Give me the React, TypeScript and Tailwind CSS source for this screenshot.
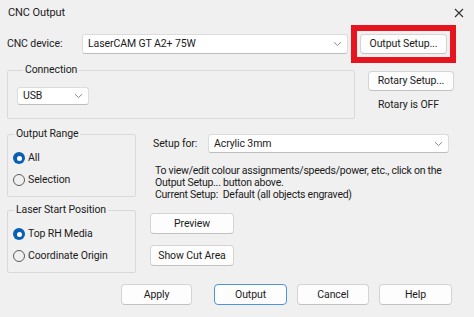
import React from 'react';

const Chevron = () => (
  <svg width="9" height="6" viewBox="0 0 9 6" className="shrink-0">
    <path d="M1 1.2 L4.5 4.6 L8 1.2" fill="none" stroke="#8a8a8a" strokeWidth="1" />
  </svg>
);

function Combo({ value, className }: { value: string; className: string }) {
  return (
    <div
      className={`flex items-center justify-between bg-white border border-[#dcdcdc] border-b-[#bdbdbd] rounded-[3px] pl-[5px] pr-[5px] ${className}`}
    >
      <span>{value}</span>
      <Chevron />
    </div>
  );
}

function Btn({ label, className, primary }: { label: string; className: string; primary?: boolean }) {
  return (
    <div
      className={`flex items-center justify-center bg-[#fdfdfd] rounded-[4px] border ${
        primary ? 'border-[#4f93d8]' : 'border-[#d4d4d4] border-b-[#c2c2c2]'
      } ${className}`}
    >
      {label}
    </div>
  );
}

function Radio({ label, checked }: { label: string; checked?: boolean }) {
  return (
    <div className="h-[22px] flex items-center pl-[5px]">
      {checked ? (
        <span className="w-[12px] h-[12px] rounded-full bg-[#0a5fb4] flex items-center justify-center">
          <span className="w-[5px] h-[5px] rounded-full bg-white" />
        </span>
      ) : (
        <span className="w-[12px] h-[12px] rounded-full border border-[#5c5c5c]" />
      )}
      <span className="ml-[3px]">{label}</span>
    </div>
  );
}

function Group({ title, className, children }: { title: string; className: string; children: React.ReactNode }) {
  return (
    <fieldset className={`border border-[#d9d9d9] rounded-[2px] ${className}`}>
      <legend className="ml-[6px] px-[2px] h-[14px] leading-[14px]">{title}</legend>
      {children}
    </fieldset>
  );
}

export default function App() {
  return (
    <div className="w-[474px] h-[317px] bg-[#f0f0f0] flex flex-col text-[10.5px] leading-[14px] tracking-[-0.1px] text-[#1b1b1b] font-['Roboto',sans-serif] overflow-hidden">
      {/* title bar */}
      <div className="h-[26px] flex items-center justify-between pl-[8px] pr-[10px]">
        <span className="text-[11px]">CNC Output</span>
        <svg width="10" height="10" viewBox="0 0 10 10">
          <path d="M1 1 L9 9 M9 1 L1 9" stroke="#333" strokeWidth="1.1" />
        </svg>
      </div>

      {/* device row */}
      <div className="h-[38px] -mt-[1px] flex items-center">
        <span className="w-[82px] pl-[7px]">CNC device:</span>
        <Combo value="LaserCAM GT A2+ 75W" className="w-[266px] h-[20px]" />
        <div className="ml-[3px] w-[105px] h-[38px] border-[6px] border-[#e5141f] flex items-center justify-center">
          <Btn label="Output Setup..." className="w-[87px] h-[20px]" />
        </div>
      </div>

      {/* connection row */}
      <div className="flex">
        <Group title="Connection" className="ml-[7px] w-[348px] h-[56px] px-[9px]">
          <Combo value="USB" className="mt-[10px] w-[72px] h-[18px]" />
        </Group>
        <div className="ml-[13px] flex flex-col">
          <Btn label="Rotary Setup..." className="mt-[8px] w-[86px] h-[20px]" />
          <span className="mt-[7px] pl-[10px]">Rotary is OFF</span>
        </div>
      </div>

      {/* options */}
      <div className="flex mt-[8px]">
        <div className="ml-[7px] w-[129px] flex flex-col gap-[6px]">
          <Group title="Output Range" className="h-[70px]">
            <div className="pt-[6px]">
              <Radio label="All" checked />
              <Radio label="Selection" />
            </div>
          </Group>
          <Group title="Laser Start Position" className="h-[70px]">
            <div className="pt-[6px]">
              <Radio label="Top RH Media" checked />
              <Radio label="Coordinate Origin" />
            </div>
          </Group>
        </div>

        <div className="ml-[14px] w-[299px] flex flex-col">
          <div className="mt-[7px] flex items-center">
            <span className="w-[58px] pl-[3px]">Setup for:</span>
            <Combo value="Acrylic 3mm" className="w-[241px] h-[19px]" />
          </div>
          <div className="mt-[12px] pl-[5px] leading-[12px] tracking-[-0.25px] whitespace-nowrap">
            <div>To view/edit colour assignments/speeds/power, etc., click on the</div>
            <div>Output Setup... button above.</div>
            <div>Current Setup:&nbsp; Default (all objects engraved)</div>
          </div>
          <Btn label="Preview" className="mt-[12px] w-[84px] h-[21px]" />
          <Btn label="Show Cut Area" className="mt-[11px] w-[84px] h-[21px]" />
        </div>
      </div>

      {/* bottom buttons */}
      <div className="mt-[11px] flex pl-[121px]">
        <Btn label="Apply" className="w-[71px] h-[21px]" />
        <Btn label="Output" className="ml-[22px] w-[73px] h-[21px]" primary />
        <Btn label="Cancel" className="ml-[10px] w-[72px] h-[21px]" />
        <Btn label="Help" className="ml-[10px] w-[73px] h-[21px]" />
      </div>
    </div>
  );
}
